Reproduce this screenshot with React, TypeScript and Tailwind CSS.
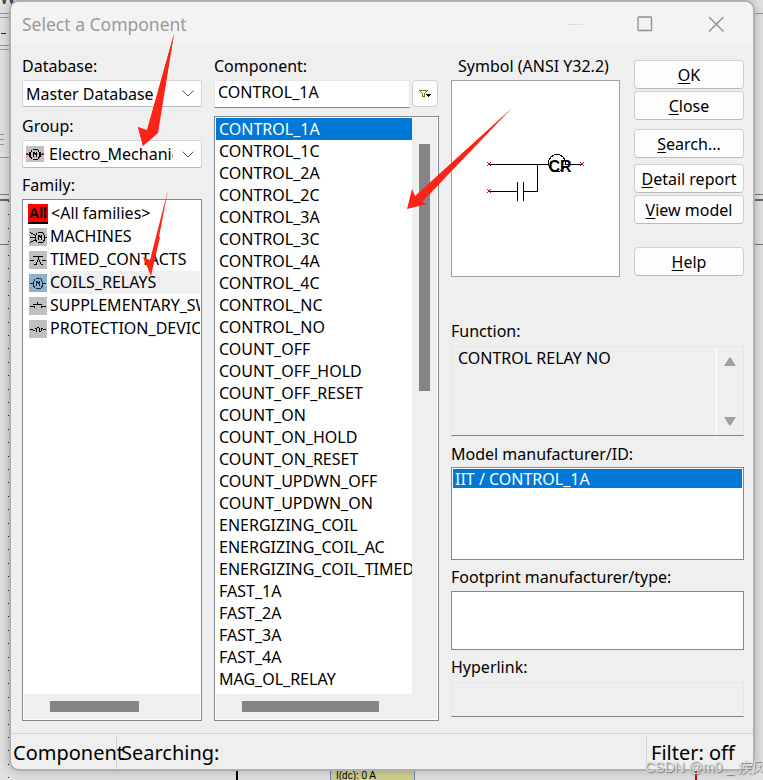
import React from "react";

const components = [
  "CONTROL_1A", "CONTROL_1C", "CONTROL_2A", "CONTROL_2C", "CONTROL_3A", "CONTROL_3C",
  "CONTROL_4A", "CONTROL_4C", "CONTROL_NC", "CONTROL_NO", "COUNT_OFF", "COUNT_OFF_HOLD",
  "COUNT_OFF_RESET", "COUNT_ON", "COUNT_ON_HOLD", "COUNT_ON_RESET", "COUNT_UPDWN_OFF",
  "COUNT_UPDWN_ON", "ENERGIZING_COIL", "ENERGIZING_COIL_AC", "ENERGIZING_COIL_TIMED",
  "FAST_1A", "FAST_2A", "FAST_3A", "FAST_4A", "MAG_OL_RELAY",
];

function Icon({ children, blue = false }: { children: React.ReactNode; blue?: boolean }) {
  return (
    <svg className="block shrink-0" width="18" height="18" viewBox="0 0 18 18" shapeRendering="crispEdges" fill="none" stroke={blue ? "#102c44" : "#000"}>
      <rect width="18" height="18" fill={blue ? "#90b0cc" : "#c0c0c0"} stroke="none" />
      {children}
    </svg>
  );
}

function Coil({ dx = 0 }: { dx?: number }) {
  return (
    <g transform={`translate(${dx} 0)`}>
      <path d="M6.5 4.5h5M6.5 14.5h5M4.5 6.5v6M13.5 6.5v6M5.5 5v2M5.5 12v2M12.5 5v2M12.5 12v2" />
      <path d="M7.5 12V6.5M10.5 12V6.5M8.5 7v2M9.5 8v2" />
    </g>
  );
}

const families = [
  {
    name: "<All families>",
    icon: (
      <span className="flex h-[20px] w-[20px] shrink-0 items-center justify-center border-b-2 border-black bg-[#f00] font-['Liberation_Sans'] text-[14px] font-bold leading-none">
        All
      </span>
    ),
  },
  { name: "MACHINES", icon: <Icon><Coil dx={2} /><path d="M1 4.5h1M2 5.5h2M4 6.5h2M1 9.5h5M4 12.5h2M2 13.5h2M1 14.5h1M16 9.5h2" /></Icon> },
  { name: "TIMED_CONTACTS", icon: <Icon><path d="M1 9.5h4M13 9.5h4M4 5.5h10M9.5 5v4M8.5 9v2M10.5 9v2M7.5 11v2M11.5 11v2M5 13.5h3M12 13.5h2" /></Icon> },
  { name: "COILS_RELAYS", icon: <Icon blue><Coil /><path d="M1 9.5h4M13 9.5h4" /></Icon> },
  { name: "SUPPLEMENTARY_SWITCHES", icon: <Icon><path d="M1 9.5h5M12 9.5h5M4 7.5h9M8.5 5v3M5.5 9v2M12.5 9v2" /></Icon> },
  { name: "PROTECTION_DEVICES", icon: <Icon><path d="M1 9.5h3M4 10.5h2M6 8.5h2M8 7.5h2M10.5 8v3M7.5 9v3M10 11.5h2M12.5 8v3M12 8.5h2M14 9.5h3" /></Icon> },
];

function Button({ hot, rest, gap }: { hot: string; rest: string; gap: string }) {
  return (
    <button className={`${gap} flex h-[29px] w-[110px] shrink-0 items-center justify-center whitespace-pre rounded-[4px] border border-[#d0d0d0] border-b-[#bcbcbc] bg-[#fdfdfd] pt-px leading-none`}>
      <span className="underline decoration-1 underline-offset-2">{hot}</span>{rest}
    </button>
  );
}

function Chevron() {
  return (
    <svg className="shrink-0" width="12" height="7" viewBox="0 0 12 7" fill="none" stroke="#555"><path d="M.7.7 6 6 11.3.7" /></svg>
  );
}

function Backdrop() {
  return (
    <>
      <div className="absolute inset-0 overflow-hidden bg-[#e2e2e2]">
        <div className="absolute -top-[12px] left-0 h-[20px] whitespace-pre font-['Noto_Sans'] text-[17px] leading-[20px] text-[#333]">Window  Help</div>
        <svg className="absolute inset-0" width="763" height="780" shapeRendering="crispEdges">
          <path d="M0 13.5h11M0 17.5h11M0 45.5h11M0 49.5h11M753 13.5h10" stroke="#999" />
          <path d="M1 33.5h5" stroke="#222" />
          <path d="M0 134.5h4M0 139.5h4M0 144.5h4M0 157.5h11" stroke="#999" />
          <path d="M0 194.5h11M753 194.5h10M0 244.5h11M753 244.5h10" stroke="#777" />
          <path d="M0 199.5h11M753 199.5h10" stroke="#666" strokeWidth="2" />
          <path d="M8.5 201V780" stroke="#222" strokeDasharray="1 12.4" />
          <path d="M236.5 770v10" stroke="#000" strokeWidth="2" />
          <path d="M696 770v10" stroke="#d00000" strokeWidth="2" />
        </svg>
        <div className="absolute left-[330px] top-[768px] h-[14px] w-[85px] border border-[#6f86c0] bg-[#d2d18e] pl-[5px] pt-[1px] font-['Liberation_Sans'] text-[10px] leading-[12px]">I(dc): 0 A</div>
      </div>
    </>
  );
}

function Schematic() {
  return (
    <svg width="167" height="195" viewBox="450 81 167 195" shapeRendering="crispEdges">
      <path d="M488 164.5h58M563 164.5h17M535.5 164v27M488 191.5h27M522 191.5h14M515.5 182v19M521.5 182v19" stroke="#000" fill="none" />
      <circle cx="555" cy="163" r="8.5" stroke="#000" fill="none" />
      <text x="546.5" y="172" textLength="23" fontSize="16" fontWeight="bold" fontFamily="Liberation Sans, sans-serif">CR</text>
      <path d="m485 162 4 4m0-4-4 4m0 23 4 4m0-4-4 4m93-31 4 4m0-4-4 4" stroke="#d00" />
    </svg>
  );
}

export default function App() {
  return (
    <div className="relative h-[780px] w-[763px] overflow-hidden font-['Noto_Sans',sans-serif] text-[16px] leading-[22px] text-black">
      <Backdrop />
      <div className="absolute left-[9px] top-0 flex h-[771px] w-[746px] flex-col overflow-hidden rounded-[10px] border-2 border-[#b0b0b0] bg-[#efefef] shadow-[0_0_12px_rgba(0,0,0,0.25)]">
        <header className="flex h-[43px] shrink-0 items-center bg-[#f3f3f3] pl-[11px] text-[#999]">
          <h1 className="w-[546px] text-[17.5px]">Select a Component</h1>
          <span className="mt-[2px] h-px w-[15px] bg-[#ddd]" />
          <svg className="ml-[54px]" width="90" height="18" viewBox="0 0 90 18" fill="none" stroke="#8c8c8c" strokeWidth="1.3">
            <rect x="1" y="2" width="13.5" height="13.5" rx="1" />
            <path d="m72 2 14.5 14.5M86.500 2 72 16.500" />
          </svg>
        </header>
        <main className="flex h-[688px] shrink-0 gap-[12px] pl-[11px]">
          <section className="w-[180px] shrink-0">
            <div className="mt-[10px] h-[25px]">Database:</div>
            <div className="flex h-[27px] items-center justify-between rounded-[2px] border border-[#d4d4d4] border-b-[#b8b8b8] bg-[#fdfdfd] px-[3px] pr-[7px]">
              <span>Master Database</span><Chevron />
            </div>
            <div className="mt-[8px] h-[25px]">Group:</div>
            <div className="flex h-[28px] items-center rounded-[2px] border border-[#d4d4d4] border-b-[#b8b8b8] bg-[#fdfdfd] pl-[3px] pr-[7px]">
              <svg className="mr-[5px] shrink-0" width="18" height="16" viewBox="0 1 18 16" shapeRendering="crispEdges" fill="none" stroke="#000">
                <rect width="18" height="18" fill="#c0c0c0" stroke="none" />
                <Coil /><path d="M2 9.500h3M13 9.500h3M3.500 7v5M14.500 7v5" /><path d="M0 9h2M16 9h2" stroke="#e00" strokeWidth="2" />
              </svg>
              <span className="mr-[9px] w-[125px] overflow-hidden whitespace-nowrap">Electro_Mechanical</span><Chevron />
            </div>
            <div className="mt-[6px] h-[25px]">Family:</div>
            <div className="flex h-[522px] flex-col border border-[#828790] bg-white p-px">
              <ul className="mt-px flex-1 overflow-hidden whitespace-nowrap">
                {families.map((f, i) => (
                  <li key={f.name} className={`flex h-[23px] items-center ${i === 0 ? "pl-[4px] gap-[3px]" : "pl-[5px] gap-[3px]"}`}>
                    {f.icon}
                    <span className={`h-[23px] flex-1 ${i === 3 ? "bg-[#efefef]" : ""}`}>{f.name}</span>
                  </li>
                ))}
              </ul>
              <div className="flex h-[25px] items-center bg-[#efefef] pl-[26px]"><div className="h-[11px] w-[89px] bg-[#858585]" /></div>
            </div>
          </section>
          <section className="w-[225px] shrink-0">
            <div className="mt-[10px] h-[25px]">Component:</div>
            <div className="flex gap-[2px]">
              <div className="h-[28px] w-[196px] border border-[#e6e6e6] border-b-[#858585] bg-white pl-[3px]">CONTROL_1A</div>
              <button className="flex h-[27px] w-[26px] items-center justify-center rounded-[4px] border border-[#d0d0d0] bg-[#fdfdfd]">
                <svg width="12" height="8" viewBox="0 0 12 8" shapeRendering="crispEdges" fill="none">
                  <path d="M0 .5h9M1.500 1v1M2.500 2v1M3.500 3v4M5.500 3v3M6.500 2v1M7.500 1v1M3 6.500h3" stroke="#77771c" />
                  <path d="M7 4h5v1h-1v1h-1v1h-1V6H8V5H7z" fill="#000" />
                </svg>
              </button>
            </div>
            <div className="mt-[8px] flex h-[605px] flex-col border border-[#828790] bg-white p-px">
              <div className="flex h-[576px]">
                <ul className="w-[196px] overflow-hidden whitespace-nowrap">
                  {components.map((c, i) => (
                    <li key={c} className={`h-[22px] pl-[3px] ${i === 0 ? "bg-[#0078d7] text-white" : ""}`}>{c}</li>
                  ))}
                </ul>
                <div className="flex-1 bg-[#efefef] pl-[7px] pt-[26px]"><div className="h-[247px] w-[11px] bg-[#858585]" /></div>
              </div>
              <div className="flex flex-1 items-center bg-[#efefef] pl-[26px]"><div className="h-[11px] w-[137px] bg-[#858585]" /></div>
            </div>
          </section>
          <section className="w-[293px] shrink-0">
            <div className="flex h-[275px] justify-between">
              <div>
                <div className="mt-[10px] h-[25px] pl-[7px]">Symbol (ANSI Y32.2)</div>
                <div className="h-[197px] w-[169px] border border-[#a0a0a0] bg-white"><Schematic /></div>
              </div>
              <div className="flex w-[110px] flex-col">
                <Button hot="O" rest="K" gap="mt-[15px]" />
                <Button hot="C" rest="lose" gap="mt-[2px]" />
                <Button hot="S" rest="earch..." gap="mt-[9px]" />
                <Button hot="D" rest="etail report" gap="mt-[6px]" />
                <Button hot="V" rest="iew model" gap="mt-[2px]" />
                <Button hot="H" rest="elp" gap="mt-[23px]" />
              </div>
            </div>
            <div className="h-[26px]">Function:</div>
            <div className="flex h-[90px] border border-[#e6e6e6] border-b-[#858585]">
              <div className="flex-1 pl-[6px]">CONTROL RELAY NO</div>
              <div className="flex w-[27px] flex-col items-center justify-between border-l border-white pb-[9px] pt-[10px]">
                <svg width="12" height="9"><path d="M0 9 5 1q1-1 2 0l5 8z" fill="#a0a0a0" /></svg>
                <svg width="12" height="9"><path d="m0 0 5 8q1 1 2 0l5-8z" fill="#a0a0a0" /></svg>
              </div>
            </div>
            <div className="mt-[7px] h-[24px]">Model manufacturer/ID:</div>
            <div className="h-[93px] border border-[#828790] bg-white p-px">
              <div className="h-[19px] bg-[#0078d7] pl-[2px] leading-[20px] text-white">IIT / CONTROL_1A</div>
            </div>
            <div className="mt-[6px] h-[25px]">Footprint manufacturer/type:</div>
            <div className="h-[59px] border border-[#828790] bg-white" />
            <div className="mt-[6px] h-[26px]">Hyperlink:</div>
            <div className="h-[35px] border border-[#e6e6e6] border-b-[#858585]" />
          </section>
        </main>
        <footer className="flex flex-1 border-t border-[#d4d4d4] pt-[2px] text-[20px] leading-[33px]">
          <div className="w-[106px] border-r border-[#d4d4d4] pl-[2px]">Component</div>
          <div className="w-[530px] border-r border-[#d4d4d4] pl-[4px]">Searching:</div>
          <div className="pl-[4px]">Filter: off</div>
        </footer>
      </div>
      <svg className="absolute inset-0" width="763" height="780" fill="#ff2216">
        <path d="M174 34 157 132l-8 0-6 14-5-19 9 3z" />
        <path d="M174 34 158 133l-15 13-5-19 9 4z" />
        <path d="M168 190 159 237l1 0-9 39-8-19 7 3z" />
        <path d="M512 108 422 202l5 2-20 5 5-20 3 7z" />
      </svg>
      <div className="absolute left-[645px] top-[757px] whitespace-nowrap font-['Liberation_Sans','Noto_Sans_CJK_SC',sans-serif] text-[14px] leading-[20px] text-[#dedede] [text-shadow:1px_1px_1px_#777]">CSDN @m0 _ 疾风</div>
    </div>
  );
}
